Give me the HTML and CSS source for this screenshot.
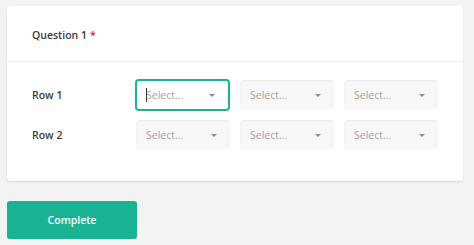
FILE: index.html
```html
<!DOCTYPE html>
<html lang="en">
<head>
  <meta charset="UTF-8">
  <meta name="viewport" content="width=device-width, initial-scale=1.0">
  <title>Survey</title>
  <link rel="stylesheet" href="styles.css">
</head>
<body>
  <div class="page">
    <div class="card">
      <div class="card-header">
        <span class="title">Question 1</span>
        <span class="required">*</span>
      </div>
      <div class="card-body">
        <div class="row">
          <div class="row-label">Row 1</div>
          <div class="select focused"><span class="caret"></span><span class="placeholder">Select...</span><span class="arrow"></span></div>
          <div class="select"><span class="placeholder">Select...</span><span class="arrow"></span></div>
          <div class="select"><span class="placeholder">Select...</span><span class="arrow"></span></div>
        </div>
        <div class="row">
          <div class="row-label">Row 2</div>
          <div class="select"><span class="placeholder">Select...</span><span class="arrow"></span></div>
          <div class="select"><span class="placeholder">Select...</span><span class="arrow"></span></div>
          <div class="select"><span class="placeholder">Select...</span><span class="arrow"></span></div>
        </div>
      </div>
    </div>
    <div class="actions">
      <button class="btn-complete">Complete</button>
    </div>
  </div>
</body>
</html>
```

FILE: styles.css
```css
html, body {
  margin: 0;
  padding: 0;
  background: #f3f3f3;
  font-family: 'Open Sans', sans-serif;
  color: #3a3a3a;
}

.page {
  padding: 6px 11px 0 7px;
}

.card {
  background: #fff;
  border-radius: 3px;
  box-shadow: 0 1px 2px rgba(0, 0, 0, .12);
}

.card-header {
  height: 56px;
  padding-left: 25px;
  padding-top: 2px;
  box-sizing: border-box;
  display: flex;
  align-items: center;
  border-bottom: 1px solid #ececec;
  font-size: 10.5px;
  font-weight: 600;
}

.required {
  color: #e60a3e;
  margin-left: 3px;
}

.card-body {
  padding: 18px 0 31px 25px;
  display: flex;
  flex-direction: column;
  gap: 10px;
}

.row {
  display: flex;
  align-items: center;
  height: 30px;
}

.row-label {
  width: 104px;
  font-size: 10.5px;
  font-weight: 600;
}

.select {
  box-sizing: border-box;
  width: 94px;
  height: 30px;
  margin-right: 10px;
  background: #f7f7f7;
  border-radius: 3px;
  box-shadow: inset 0 1px 2px rgba(0, 0, 0, .06);
  display: flex;
  align-items: center;
  padding: 0 10px;
  font-size: 10.5px;
  color: #a3a3a3;
}

.select.focused {
  background: #fff;
  border: 2px solid #19b394;
  border-radius: 4px;
  box-shadow: none;
  padding-left: 9px;
  width: 95px;
  height: 32px;
  margin-left: -1px;
}

.caret {
  width: 1px;
  height: 14px;
  background: #333;
  margin-right: -1px;
}

.placeholder {
  flex: 1;
}

.arrow {
  width: 0;
  height: 0;
  border-left: 3px solid transparent;
  border-right: 3px solid transparent;
  border-top: 3px solid #8a8a8a;
  margin-right: 3px;
}

.actions {
  margin-top: 20px;
}

.btn-complete {
  width: 130px;
  height: 38px;
  border: none;
  border-radius: 3px;
  background: #19b394;
  color: #fff;
  font-family: 'Open Sans', sans-serif;
  font-size: 10.5px;
  font-weight: 600;
  cursor: pointer;
}
```
